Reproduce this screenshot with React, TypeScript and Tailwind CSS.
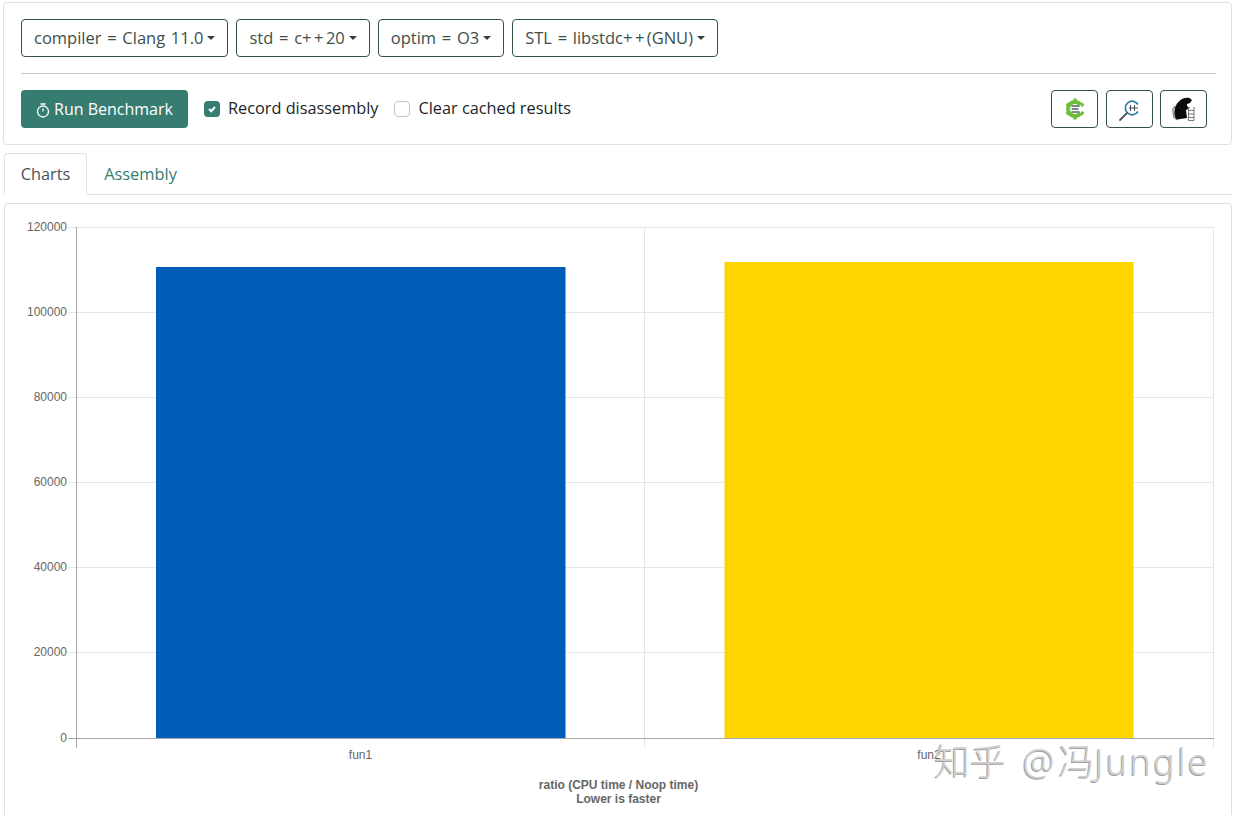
const FONT = "font-['Open_Sans','Noto_Sans',sans-serif]";

const OPTIONS = [
  { left: "compiler = Clang 11.0", plus: "", right: "" },
  { left: "std = c", plus: "++", right: "20" },
  { left: "optim = O3", plus: "", right: "" },
  { left: "STL = libstdc", plus: "++", right: "(GNU)" },
];

const Y_TICKS = [
  { label: "120000", y: 227 },
  { label: "100000", y: 312 },
  { label: "80000", y: 397 },
  { label: "60000", y: 482 },
  { label: "40000", y: 567 },
  { label: "20000", y: 652 },
  { label: "0", y: 738 },
];

function Caret() {
  return <span className="ml-[4px] inline-block w-0 h-0 border-x-[4px] border-x-transparent border-t-[4px] border-t-[#34423f]" />;
}

function GearIcon() {
  return (
    <svg width="20" height="22" viewBox="0 0 20 22" fill="none">
      <path d="M15.6 6.8A7 7 0 1 0 15.6 15.2" stroke="#6cbf3c" strokeWidth="4" />
      <path d="M10 0.5v3M10 21.5v-3M1.5 6l2.6 1.6M1.5 16l2.6-1.6M18.5 6l-2.6 1.6M18.5 16l-2.6-1.6" stroke="#6cbf3c" strokeWidth="3.4" />
      <path d="M6.5 8h8M6.5 11h7M6.5 14h8" stroke="#55605a" strokeWidth="1.5" />
    </svg>
  );
}

function SearchIcon() {
  return (
    <svg width="22" height="24" viewBox="0 0 22 24" fill="none">
      <path d="M20 7.5A6.8 6.8 0 1 0 20 14.5" stroke="#2f7fa8" strokeWidth="1.7" />
      <path d="M9 16 2 23" stroke="#4a555c" strokeWidth="1.8" strokeLinecap="round" />
      <path d="M12.5 8v6M16.5 8v6M11 11h9" stroke="#45525a" strokeWidth="1.1" />
    </svg>
  );
}

function CritterIcon() {
  return (
    <svg width="24" height="24" viewBox="0 0 24 24" fill="none">
      <path d="M3.5 9 .8 12l1 8 3.5 3" stroke="#8a8a8a" strokeWidth="1.4" />
      <path d="M7 4.5C9 1.5 14 0 17.5 1L20 3l-2 3-3 1v2l3 2-4 2 1 8-10 1.5C2 20 2 15 3 11c1-3 2-5 4-6.500z" fill="#0b0b0b" />
      <path d="M16.500 10v13.500M22 10v13.500M16.500 13.500h5.500M16.500 17h5.500M16.500 20.500h5.500M16.500 23.500h5.500" stroke="#777" strokeWidth="1" />
    </svg>
  );
}

function IconButton({ children }: { children: React.ReactNode }) {
  return (
    <button className="w-[47px] h-[38px] flex items-center justify-center rounded border border-[#34504b] bg-white">
      {children}
    </button>
  );
}

function Chart() {
  return (
    <svg width="1226" height="611" className="block">
      <g transform="translate(-5 -204)" fontFamily="'Liberation Sans', Arial, sans-serif" fontSize="12" fill="#666">
        {Y_TICKS.map((t) => (
          <g key={t.label}>
            {t.y !== 738 && <line x1="68" x2="1214" y1={t.y + 0.5} y2={t.y + 0.5} stroke="#e6e6e6" />}
            <text x="67" y={t.y + 4} textAnchor="end">{t.label}</text>
          </g>
        ))}
        <line x1="644.5" x2="644.5" y1="227" y2="748" stroke="#e6e6e6" />
        <line x1="1213.5" x2="1213.5" y1="227" y2="748" stroke="#e6e6e6" />
        <rect x="156" y="267" width="409.5" height="471" fill="#005cb9" />
        <rect x="724.5" y="262" width="409" height="476" fill="#ffd500" />
        <line x1="76.5" x2="76.5" y1="227" y2="748" stroke="#a6a6a6" />
        <line x1="68" x2="1214" y1="738.5" y2="738.5" stroke="#a6a6a6" />
        <text x="360.5" y="759" textAnchor="middle">fun1</text>
        <text x="929" y="759" textAnchor="middle">fun2</text>
        <text x="618.5" y="789" textAnchor="middle" fontWeight="700">ratio (CPU time / Noop time)</text>
        <text x="618.5" y="803" textAnchor="middle" fontWeight="700">Lower is faster</text>
      </g>
    </svg>
  );
}

export default function App() {
  return (
    <div className={`relative h-[815px] overflow-hidden bg-white ${FONT} text-[#212529]`}>
      <div className="ml-[3px] mr-[5px] mt-[2px] h-[143px] rounded border border-[#dfdfdf] pl-[17px] pr-[15px] pt-[16px]">
        <div className="flex gap-2">
          {OPTIONS.map((o) => (
            <button key={o.left} className="h-[38px] px-3 flex items-center rounded border border-[#34504b] text-[16.5px] [word-spacing:1.4px] text-[#3c4f4b]">
              {o.left}
              {o.plus && <span className="tracking-[2.5px]">{o.plus}</span>}
              {o.right}
              <Caret />
            </button>
          ))}
        </div>
        <div className="mt-4 border-t border-[#c9c9c9]" />
        <div className="mt-4 flex items-center">
          <button className="h-[38px] w-[167px] flex items-center justify-center gap-1 rounded bg-[#367c71] text-[16px] text-white">
            <svg width="14" height="15" viewBox="0 0 14 15" fill="none" stroke="#fff" strokeWidth="1.3" className="mt-[3px]">
              <circle cx="7" cy="8.5" r="5.5" />
              <path d="M4.5 1h5M7 5.5v3" />
            </svg>
            Run Benchmark
          </button>
          <span className="ml-4 w-4 h-4 rounded-[4px] bg-[#367c71] flex items-center justify-center">
            <svg width="10" height="10" viewBox="0 0 10 10" fill="none" stroke="#fff" strokeWidth="2">
              <path d="M2 5l2.2 2.2L8 3" />
            </svg>
          </span>
          <span className="ml-2 -mt-[2px] text-[16.3px]">Record disassembly</span>
          <span className="ml-4 w-4 h-4 rounded-[4px] border border-[#c4c4c4] bg-white" />
          <span className="ml-2 -mt-[2px] text-[16.3px]">Clear cached results</span>
          <div className="ml-auto mr-[9px] flex gap-[7.5px]">
            <IconButton><GearIcon /></IconButton>
            <IconButton><SearchIcon /></IconButton>
            <IconButton><CritterIcon /></IconButton>
          </div>
        </div>
      </div>

      <div className="ml-[4px] mr-[5px] mt-2 h-[42px] flex border-b border-[#dee2e6]">
        <div className="h-[42px] w-[83px] flex items-center justify-center rounded-t border border-[#dee2e6] border-b-white bg-white text-[16.3px] text-[#495057]">Charts</div>
        <div className="h-[42px] w-[107px] flex items-center justify-center text-[16.4px] text-[#367c71]">Assembly</div>
      </div>

      <div className="ml-[4px] mr-[5px] mt-2 rounded border border-[#dfdfdf] h-[640px]">
        <Chart />
      </div>

      <div className="absolute left-[934px] top-[738px] text-[36px] leading-[48px] font-light text-[#cfcfcf] font-['Noto_Sans','Noto_Sans_CJK_SC',sans-serif] [text-shadow:-1px_1px_0_#a0a0a0]">
        知乎 <span className="ml-[7px]">@</span><span className="ml-[4px]">冯</span><span className="tracking-[2.3px]">Jungle</span>
      </div>
    </div>
  );
}
